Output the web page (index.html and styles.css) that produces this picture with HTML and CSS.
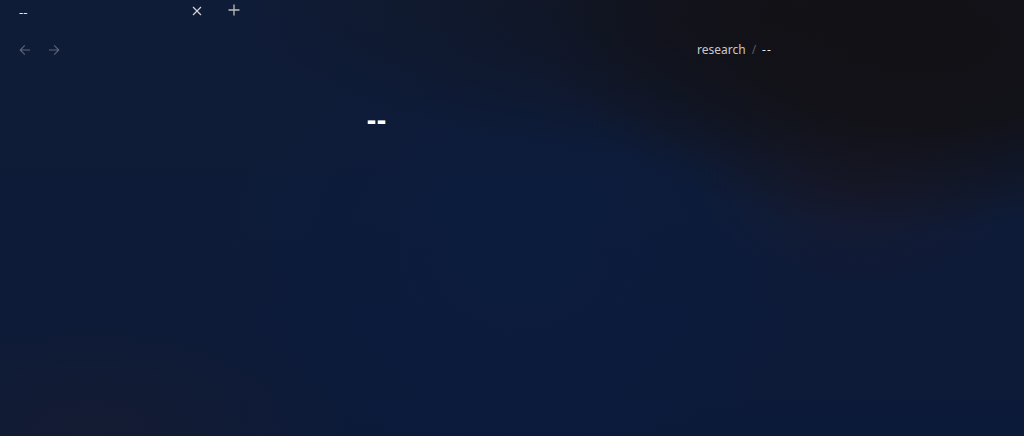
FILE: index.html
```html
<!DOCTYPE html>
<html lang="en">
<head>
<meta charset="UTF-8">
<meta name="viewport" content="width=device-width, initial-scale=1.0">
<title>--</title>
<link rel="stylesheet" href="styles.css">
</head>
<body>
<div class="tabs">
    <div class="tab">
        <span class="tab-title">--</span>
        <button class="tab-close" title="Close">
            <svg width="10" height="10" viewBox="0 0 10 10"><path d="M1 1L9 9M9 1L1 9" stroke="currentColor" stroke-width="1.2" fill="none"/></svg>
        </button>
    </div>
    <button class="tab-new" title="New tab">
        <svg width="12" height="12" viewBox="0 0 12 12"><path d="M6 0.5V11.5M0.5 6H11.5" stroke="currentColor" stroke-width="1.3" fill="none"/></svg>
    </button>
</div>

<div class="toolbar">
    <div class="nav">
        <button class="nav-btn" title="Back">
            <svg width="12" height="12" viewBox="0 0 12 12"><path d="M11 6H1.2M5.8 1.4L1.2 6L5.8 10.6" stroke="currentColor" stroke-width="1.1" fill="none"/></svg>
        </button>
        <button class="nav-btn" title="Forward">
            <svg width="12" height="12" viewBox="0 0 12 12"><path d="M1 6H10.8M6.2 1.4L10.8 6L6.2 10.6" stroke="currentColor" stroke-width="1.1" fill="none"/></svg>
        </button>
    </div>
    <div class="crumbs">
        <span class="crumb">research</span>
        <span class="sep">/</span>
        <span class="crumb current">--</span>
    </div>
</div>

<main class="content">
    <h1 class="page-title">--</h1>
</main>
</body>
</html>
```

FILE: styles.css
```css
/* page */
html, body {
    height: 100%;
}

body {
    margin: 0;
    font-family: "Noto Sans", "Open Sans", sans-serif;
    color: #e6e6e6;
    overflow: hidden;
    background-color: #0c1a38;
    background-image:
        radial-gradient(ellipse 380px 190px at 930px 40px, rgba(18, 17, 22, 1) 0%, rgba(18, 17, 22, 0.9) 45%, rgba(18, 17, 22, 0) 100%),
        radial-gradient(ellipse 520px 150px at 760px 10px, rgba(17, 18, 26, 0.95) 0%, rgba(17, 18, 26, 0) 100%),
        radial-gradient(ellipse 160px 120px at 860px 170px, rgba(28, 24, 40, 0.7) 0%, rgba(28, 24, 40, 0) 100%),
        radial-gradient(ellipse 260px 120px at 90px 430px, rgba(22, 28, 48, 0.8) 0%, rgba(22, 28, 48, 0) 100%),
        radial-gradient(ellipse 300px 260px at 520px 250px, rgba(10, 28, 64, 0.6) 0%, rgba(10, 28, 64, 0) 100%),
        linear-gradient(180deg, #0f1c37 0%, #0c1a39 100%);
}

button {
    background: none;
    border: none;
    padding: 0;
    cursor: pointer;
    color: inherit;
    display: flex;
    align-items: center;
    justify-content: center;
}

/* tab strip */
.tabs {
    display: flex;
    align-items: center;
    height: 22px;
}

.tab {
    width: 187px;
    padding-left: 19px;
    display: flex;
    align-items: center;
    justify-content: space-between;
}

.tab-title {
    font-size: 13px;
    color: #e8e8e8;
    line-height: 22px;
    margin-top: 1px;
}

.tab-close {
    width: 18px;
    height: 18px;
    color: #d4d4d4;
}

.tab-new {
    width: 18px;
    height: 18px;
    margin-left: 19px;
    margin-top: -2px;
    color: #bdbdbd;
}

/* toolbar */
.toolbar {
    display: flex;
    align-items: center;
    height: 32px;
    margin-top: 11px;
}

.nav {
    display: flex;
    gap: 17px;
    padding-left: 19px;
    margin-top: 1px;
}

.nav-btn {
    width: 12px;
    height: 12px;
    color: #5d6478;
}

.crumbs {
    margin-left: 637px;
    display: flex;
    align-items: center;
    gap: 6px;
    font-size: 12px;
}

.crumb {
    color: #c9c9cc;
}

.crumb.current {
    color: #e6e6e6;
    letter-spacing: 1px;
}

.sep {
    color: #5c5c66;
}

/* content */
.content {
    padding-left: 367px;
    padding-top: 38px;
}

.page-title {
    margin: 0;
    font-size: 28px;
    font-weight: 700;
    color: #ffffff;
    line-height: 32px;
    letter-spacing: 1px;
}
```
